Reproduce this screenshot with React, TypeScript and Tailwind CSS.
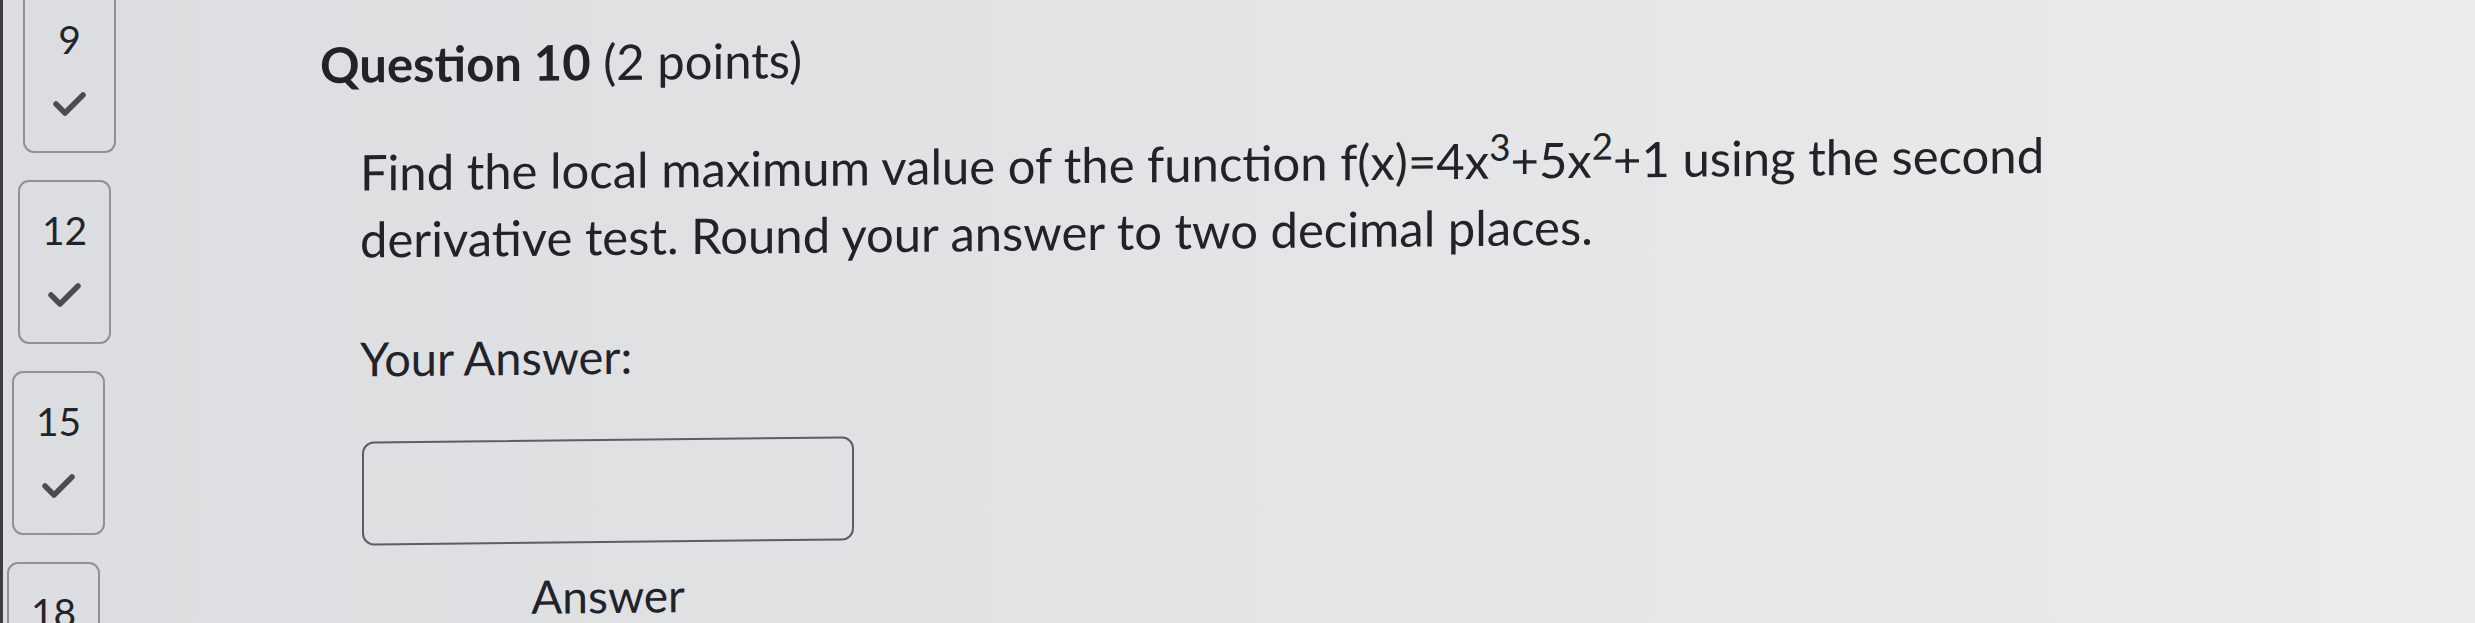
import React from 'react';

const CheckMark: React.FC = () => (
  <svg width="37" height="28" viewBox="0 0 37 28" fill="none" className="mt-[32px]">
    <path d="M5 13 L14 22 L32 4" stroke="#4a4c54" strokeWidth="5.5" strokeLinecap="round" strokeLinejoin="round" />
  </svg>
);

const QuestionTile: React.FC<{ num: number; className: string }> = ({ num, className }) => (
  <div className={`flex h-[164px] w-[93px] shrink-0 flex-col items-center rounded-[11px] border-2 border-[#8e9196] pt-[29px] ${className}`}>
    <span className="text-[39px] leading-none text-[#23242a]">{num}</span>
    <CheckMark />
  </div>
);

export default function App() {
  return (
    <div className="relative flex h-[623px] w-full overflow-hidden bg-linear-to-r from-[#dcdde0] via-[#e3e4e5] to-[#ebebeb] font-['Lato','Noto_Sans',sans-serif] text-[#22232a]">
      <div className="w-[3px] shrink-0 bg-[#3b3c40]" />

      {/* question navigation */}
      <div className="flex w-[317px] shrink-0 flex-col gap-[27px] -mt-[11px]">
        <QuestionTile num={9} className="ml-[20px]" />
        <QuestionTile num={12} className="ml-[15px]" />
        <QuestionTile num={15} className="ml-[9px]" />
        <QuestionTile num={18} className="ml-[4px]" />
      </div>

      {/* question body */}
      <div className="flex-1 origin-top-left -skew-y-[0.6deg] pt-[40px]">
        <h2 className="text-[49px] leading-none">
          <span className="font-bold">Question 10</span> (2 points)
        </h2>

        <div className="ml-[40px] mt-[50px]">
          <p className="w-[1760px] text-[49px] leading-[67px]">
            Find the local maximum value of the function f(x)=4x<sup>3</sup>+5x<sup>2</sup>+1 using the second derivative test. Round your answer to two decimal places.
          </p>

          <p className="mt-[63px] text-[47px] leading-none">Your Answer:</p>

          <input
            type="text"
            aria-label="Answer"
            className="mt-[59px] ml-[2px] block h-[104px] w-[492px] rounded-[12px] border-2 border-[#5b5d68] bg-transparent"
          />

          <p className="mt-[30px] ml-[2px] w-[492px] text-center text-[46px] leading-none">Answer</p>
        </div>
      </div>
    </div>
  );
}
